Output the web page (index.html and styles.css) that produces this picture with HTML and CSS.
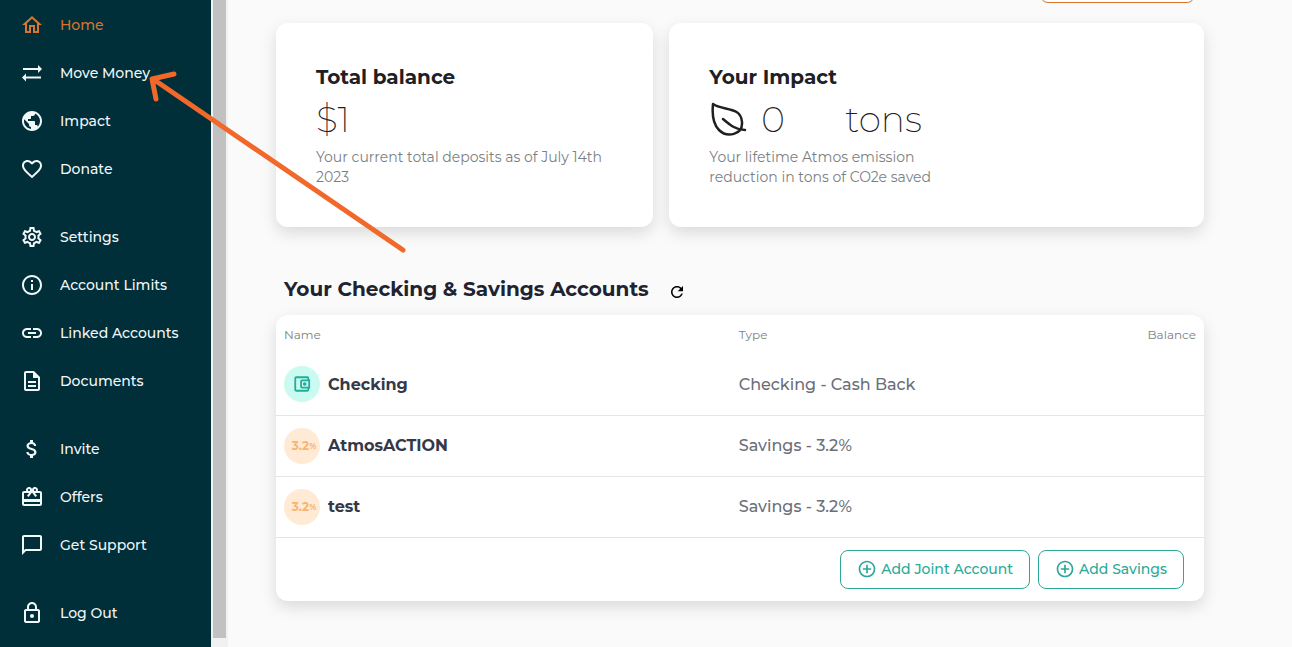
FILE: index.html
```html
<!DOCTYPE html>
<html lang="en">
<head>
  <meta charset="UTF-8" />
  <meta name="viewport" content="width=device-width, initial-scale=1.0" />
  <title>Atmos - Home</title>
  <link rel="stylesheet" href="styles.css">
</head>
<body>
  <div class="app">
    <nav class="sidebar">
      <div class="nav-group">
        <a class="nav-link active" href="#">
          <svg class="icon" viewBox="0 0 24 24"><path d="M12 5.69l5 4.5V18h-2v-6H9v6H7v-7.81l5-4.5M12 3L2 12h3v8h6v-6h2v6h6v-8h3L12 3z"/></svg>
          Home
        </a>
        <a class="nav-link" href="#">
          <svg class="icon" viewBox="0 0 24 24"><path d="M3 7h15V4l4 4-4 4V9H3zM21 15.500v2H6v3l-4-4 4-4v3z"/></svg>
          Move Money
        </a>
        <a class="nav-link" href="#">
          <svg class="icon" viewBox="0 0 24 24"><path d="M12 2C6.480 2 2 6.480 2 12s4.480 10 10 10 10-4.480 10-10S17.520 2 12 2zm-1 17.930c-3.950-.49-7-3.850-7-7.930 0-.62.080-1.210.21-1.790L9 15v1c0 1.100.9 2 2 2v1.930zm6.900-2.540c-.26-.81-1-1.390-1.900-1.390h-1v-3c0-.55-.45-1-1-1H8v-2h2c.55 0 1-.45 1-1V7h2c1.100 0 2-.9 2-2v-.41c2.930 1.190 5 4.060 5 7.410 0 2.080-.8 3.970-2.100 5.390z"/></svg>
          Impact
        </a>
        <a class="nav-link" href="#">
          <svg class="icon" viewBox="0 0 24 24"><path d="M16.500 3c-1.740 0-3.410.81-4.500 2.090C10.910 3.810 9.240 3 7.500 3 4.420 3 2 5.420 2 8.500c0 3.780 3.400 6.860 8.550 11.540L12 21.350l1.450-1.320C18.600 15.360 22 12.280 22 8.500 22 5.420 19.580 3 16.500 3zm-4.400 15.550l-.1.100-.1-.1C7.140 14.240 4 11.390 4 8.500 4 6.500 5.500 5 7.500 5c1.540 0 3.040.99 3.570 2.360h1.870C13.460 5.990 14.960 5 16.500 5c2 0 3.500 1.500 3.500 3.500 0 2.890-3.140 5.740-7.900 10.050z"/></svg>
          Donate
        </a>
      </div>

      <div class="nav-group">
        <a class="nav-link" href="#">
          <svg class="icon" viewBox="0 0 24 24"><path d="M19.430 12.980c.04-.32.07-.64.07-.98 0-.34-.03-.66-.07-.98l2.110-1.650c.19-.15.24-.42.12-.64l-2-3.460c-.09-.16-.26-.25-.44-.25-.06 0-.12.010-.17.030l-2.490 1c-.52-.4-1.080-.73-1.690-.98l-.38-2.650C14.460 2.180 14.250 2 14 2h-4c-.25 0-.46.18-.49.42l-.38 2.650c-.61.25-1.170.59-1.690.98l-2.490-1c-.06-.02-.12-.03-.18-.03-.17 0-.34.09-.43.25l-2 3.460c-.13.22-.07.49.12.64l2.110 1.650c-.04.32-.07.65-.07.98 0 .33.03.66.07.98l-2.110 1.650c-.19.15-.24.42-.12.64l2 3.460c.09.16.26.25.44.25.06 0 .12-.01.17-.03l2.490-1c.52.4 1.080.73 1.690.98l.38 2.650c.03.24.24.42.49.42h4c.25 0 .46-.18.49-.42l.38-2.650c.61-.25 1.170-.59 1.690-.98l2.490 1c.06.02.12.03.18.03.17 0 .34-.09.43-.25l2-3.460c.12-.22.07-.49-.12-.64l-2.110-1.650zm-1.980-1.710c.04.31.05.52.05.73 0 .21-.02.43-.05.73l-.14 1.130.89.7 1.080.84-.7 1.210-1.270-.51-1.040-.42-.9.680c-.43.32-.84.56-1.250.73l-1.060.43-.16 1.130-.2 1.350h-1.400l-.19-1.350-.16-1.130-1.060-.43c-.43-.18-.83-.41-1.230-.71l-.91-.7-1.060.43-1.270.51-.7-1.210 1.080-.84.89-.7-.14-1.130c-.03-.31-.05-.54-.05-.74s.02-.43.05-.73l.14-1.130-.89-.7-1.080-.84.7-1.210 1.270.51 1.040.42.9-.68c.43-.32.84-.56 1.250-.73l1.060-.43.16-1.130.2-1.350h1.390l.19 1.350.16 1.130 1.060.43c.43.18.83.41 1.230.71l.91.7 1.060-.43 1.270-.51.7 1.210-1.070.85-.89.7.14 1.130zM12 8c-2.210 0-4 1.790-4 4s1.790 4 4 4 4-1.790 4-4-1.790-4-4-4zm0 6c-1.100 0-2-.9-2-2s.9-2 2-2 2 .9 2 2-.9 2-2 2z"/></svg>
          Settings
        </a>
        <a class="nav-link" href="#">
          <svg class="icon" viewBox="0 0 24 24"><path d="M11 7h2v2h-2zm0 4h2v6h-2zm1-9C6.480 2 2 6.480 2 12s4.480 10 10 10 10-4.480 10-10S17.520 2 12 2zm0 18c-4.410 0-8-3.590-8-8s3.590-8 8-8 8 3.590 8 8-3.590 8-8 8z"/></svg>
          Account Limits
        </a>
        <a class="nav-link" href="#">
          <svg class="icon" viewBox="0 0 24 24"><path d="M3.900 12c0-1.710 1.390-3.100 3.100-3.100h4V7H7c-2.760 0-5 2.240-5 5s2.240 5 5 5h4v-1.900H7c-1.710 0-3.100-1.390-3.100-3.100zM8 13h8v-2H8v2zm9-6h-4v1.900h4c1.710 0 3.100 1.390 3.100 3.100s-1.390 3.100-3.100 3.100h-4V17h4c2.760 0 5-2.240 5-5s-2.240-5-5-5z"/></svg>
          Linked Accounts
        </a>
        <a class="nav-link" href="#">
          <svg class="icon" viewBox="0 0 24 24"><path d="M8 16h8v2H8zm0-4h8v2H8zm6-10H6c-1.100 0-2 .9-2 2v16c0 1.100.89 2 1.990 2H18c1.100 0 2-.9 2-2V8l-6-6zm4 18H6V4h7v5h5v11z"/></svg>
          Documents
        </a>
      </div>

      <div class="nav-group">
        <a class="nav-link" href="#">
          <svg class="icon" viewBox="0 0 24 24"><path d="M11.800 10.900c-2.270-.59-3-1.200-3-2.150 0-1.090 1.010-1.850 2.700-1.850 1.780 0 2.440.85 2.500 2.100h2.210c-.07-1.720-1.120-3.300-3.210-3.810V3h-3v2.160c-1.940.42-3.500 1.680-3.500 3.610 0 2.310 1.910 3.460 4.700 4.130 2.500.6 3 1.480 3 2.410 0 .69-.49 1.790-2.700 1.790-2.060 0-2.870-.92-2.980-2.100h-2.200c.12 2.190 1.760 3.420 3.680 3.830V21h3v-2.150c1.950-.37 3.500-1.500 3.500-3.550 0-2.840-2.430-3.810-4.700-4.400z"/></svg>
          Invite
        </a>
        <a class="nav-link" href="#">
          <svg class="icon" viewBox="0 0 24 24"><path d="M20 6h-2.180c.11-.31.18-.65.18-1 0-1.660-1.340-3-3-3-1.050 0-1.960.54-2.500 1.350l-.5.670-.5-.68C10.960 2.540 10.050 2 9 2 7.340 2 6 3.340 6 5c0 .35.070.69.18 1H4c-1.110 0-1.990.89-1.990 2L2 19c0 1.110.89 2 2 2h16c1.110 0 2-.89 2-2V8c0-1.110-.89-2-2-2zm-5-2c.55 0 1 .45 1 1s-.45 1-1 1-1-.45-1-1 .45-1 1-1zM9 4c.55 0 1 .45 1 1s-.45 1-1 1-1-.45-1-1 .45-1 1-1zm11 15H4v-2h16v2zm0-5H4V8h5.080L7 10.830 8.620 12 12 7.400l3.380 4.600L17 10.830 14.920 8H20v6z"/></svg>
          Offers
        </a>
        <a class="nav-link" href="#">
          <svg class="icon" viewBox="0 0 24 24"><path d="M20 2H4c-1.100 0-2 .9-2 2v18l4-4h14c1.100 0 2-.9 2-2V4c0-1.100-.9-2-2-2zm0 14H5.170L4 17.170V4h16v12z"/></svg>
          Get Support
        </a>
      </div>

      <div class="nav-group">
        <a class="nav-link" href="#">
          <svg class="icon" viewBox="0 0 24 24"><path d="M18 8h-1V6c0-2.760-2.240-5-5-5S7 3.240 7 6v2H6c-1.100 0-2 .9-2 2v10c0 1.100.9 2 2 2h12c1.100 0 2-.9 2-2V10c0-1.100-.9-2-2-2zM9 6c0-1.660 1.340-3 3-3s3 1.340 3 3v2H9V6zm9 14H6V10h12v10zm-6-3c1.100 0 2-.9 2-2s-.9-2-2-2-2 .9-2 2 .9 2 2 2z"/></svg>
          Log Out
        </a>
      </div>
    </nav>

    <div class="scroll-track"><div class="scroll-thumb"></div></div>

    <main class="content">
      <div class="top-actions">
        <button class="promo-btn" type="button"></button>
      </div>

      <div class="summary">
        <section class="card balance-card">
          <h2>Total balance</h2>
          <p class="figure">$1</p>
          <p class="note">Your current total deposits as of July 14th 2023</p>
        </section>

        <section class="card impact-card">
          <h2>Your Impact</h2>
          <p class="figure">
            <svg class="leaf" viewBox="0 0 38 36"><path d="M4 3C14 10 32 5 33 21C34 34 18 37 10 29C4 23 3 13 4 3ZM14 18C21 24 27 29 36 29"/></svg>
            <span class="amount">0</span>
            <span>tons</span>
          </p>
          <p class="note">Your lifetime Atmos emission reduction in tons of CO2e saved</p>
        </section>
      </div>

      <div class="section-title">
        <h2>Your Checking &amp; Savings Accounts</h2>
        <button class="refresh-btn" type="button" aria-label="Refresh">
          <svg viewBox="0 0 24 24"><path d="M17.650 6.350C16.200 4.900 14.210 4 12 4c-4.420 0-7.990 3.580-7.990 8s3.570 8 7.990 8c3.730 0 6.840-2.550 7.730-6h-2.080c-.82 2.330-3.040 4-5.650 4-3.310 0-6-2.690-6-6s2.690-6 6-6c1.660 0 3.140.69 4.220 1.780L13 11h7V4l-2.350 2.350z"/></svg>
        </button>
      </div>

      <section class="accounts">
        <table>
          <thead>
            <tr>
              <th class="col-name">Name</th>
              <th>Type</th>
              <th class="col-balance">Balance</th>
            </tr>
          </thead>
          <tbody>
            <tr>
              <td>
                <div class="account">
                  <span class="badge checking">
                    <svg viewBox="0 0 20 20"><path d="M17 6V3.500a1 1 0 0 0-1-1H3.500a1 1 0 0 0-1 1v13a1 1 0 0 0 1 1H16a1 1 0 0 0 1-1V14M10 6h8v8h-8a1 1 0 0 1-1-1V7a1 1 0 0 1 1-1z"/><circle cx="13" cy="10" r="1"/></svg>
                  </span>
                  Checking
                </div>
              </td>
              <td>Checking - Cash Back</td>
              <td></td>
            </tr>
            <tr>
              <td><div class="account"><span class="badge savings">3.2<small>%</small></span>AtmosACTION</div></td>
              <td>Savings - 3.2%</td>
              <td></td>
            </tr>
            <tr>
              <td><div class="account"><span class="badge savings">3.2<small>%</small></span>test</div></td>
              <td>Savings - 3.2%</td>
              <td></td>
            </tr>
          </tbody>
        </table>
        <div class="account-actions">
          <button class="add-btn" type="button">
            <svg viewBox="0 0 24 24"><path d="M13 7h-2v4H7v2h4v4h2v-4h4v-2h-4V7zm-1-5C6.480 2 2 6.480 2 12s4.480 10 10 10 10-4.480 10-10S17.520 2 12 2zm0 18c-4.410 0-8-3.590-8-8s3.590-8 8-8 8 3.590 8 8-3.590 8-8 8z"/></svg>
            Add Joint Account
          </button>
          <button class="add-btn" type="button">
            <svg viewBox="0 0 24 24"><path d="M13 7h-2v4H7v2h4v4h2v-4h4v-2h-4V7zm-1-5C6.480 2 2 6.480 2 12s4.480 10 10 10 10-4.480 10-10S17.520 2 12 2zm0 18c-4.410 0-8-3.590-8-8s3.590-8 8-8 8 3.590 8 8-3.590 8-8 8z"/></svg>
            Add Savings
          </button>
        </div>
      </section>
    </main>
  </div>

  <!-- Pointer to the Move Money link -->
  <svg class="pointer" viewBox="0 0 260 184"><path d="M255 180L5 9M26 4L4 9L8 29"/></svg>
</body>
</html>
```

FILE: styles.css
```css
* {
  margin: 0;
  padding: 0;
  box-sizing: border-box;
}

body {
  font-family: Montserrat, Inter, sans-serif;
  background: #fafafa;
  color: #1f2024;
  overflow: hidden;
}

button {
  font-family: inherit;
  cursor: pointer;
}

.app {
  display: flex;
  height: 100vh;
}

/* Sidebar */
.sidebar {
  flex: none;
  width: 211px;
  padding-top: 1px;
  background: #002e39;
  overflow: hidden;
}

.nav-group {
  margin-bottom: 20px;
}

.nav-link {
  display: flex;
  align-items: center;
  gap: 16px;
  height: 48px;
  padding: 0 20px;
  color: #f2f7f8;
  font-size: 14px;
  font-weight: 500;
  text-decoration: none;
  white-space: nowrap;
}

.nav-link.active {
  color: #d5762f;
}

.icon {
  flex: none;
  width: 24px;
  height: 24px;
  fill: currentColor;
}

.scroll-track {
  flex: none;
  width: 17px;
  padding: 0 2px 9px;
  background: #f1f1f1;
}

.scroll-thumb {
  height: 100%;
  background: #c1c1c1;
}

/* Main column */
.content {
  flex: 1;
  padding: 0 88px 0 48px;
}

.top-actions {
  display: flex;
  justify-content: flex-end;
  margin-top: -35px;
  padding: 0 9px 20px;
}

.promo-btn {
  width: 155px;
  height: 38px;
  border: 1px solid #d5762f;
  border-radius: 8px;
  background: #fff;
}

.summary {
  display: grid;
  grid-template-columns: repeat(12, 1fr);
  gap: 16px;
}

.card {
  padding: 40px;
  background: #fff;
  border-radius: 12px;
  box-shadow: 0 6px 16px rgba(0, 0, 0, 0.13);
}

.balance-card {
  grid-column: span 5;
}

.impact-card {
  grid-column: span 7;
}

h2 {
  font-size: 20px;
  font-weight: 700;
  line-height: 28px;
}

.figure {
  display: flex;
  align-items: center;
  height: 56px;
  font-size: 36px;
  font-weight: 200;
}

.leaf {
  width: 38px;
  height: 36px;
  margin-right: 14px;
  fill: none;
  stroke: currentColor;
  stroke-width: 2.5;
  stroke-linecap: round;
  stroke-linejoin: round;
}

.amount {
  width: 84px;
}

.note {
  color: #7b7f82;
  font-size: 14px;
  font-weight: 400;
  line-height: 20px;
}

.impact-card .note {
  max-width: 232px;
}

/* Accounts */
.section-title {
  display: flex;
  align-items: center;
  gap: 16px;
  margin: 48px 8px 12px;
  color: #20232f;
}

.refresh-btn {
  width: 24px;
  height: 24px;
  border: none;
  background: none;
}

.refresh-btn svg {
  display: block;
  width: 18px;
  margin: 5px auto 0;
}

.accounts {
  background: #fff;
  border-radius: 12px;
  box-shadow: 0 6px 16px rgba(0, 0, 0, 0.13);
}

table {
  width: 100%;
  border-collapse: collapse;
  table-layout: fixed;
}

th {
  height: 39px;
  padding: 0 8px;
  color: #7b7f82;
  font-size: 12px;
  font-weight: 400;
  text-align: left;
}

.col-name {
  width: 49%;
}

th.col-balance {
  text-align: right;
}

td {
  height: 61px;
  padding: 0 8px;
  border-bottom: 1px solid #e4e5e6;
  color: #6b6f79;
  font-size: 16px;
  font-weight: 500;
}

.account {
  display: flex;
  align-items: center;
  gap: 8px;
  color: #343848;
  font-weight: 700;
}

.badge {
  display: flex;
  align-items: center;
  justify-content: center;
  width: 36px;
  height: 36px;
  border-radius: 50%;
}

.badge.checking {
  background: #cafaf0;
}

.badge svg {
  width: 18px;
  fill: none;
  stroke: #1fae9b;
  stroke-width: 2;
}

.badge.savings {
  padding-left: 4px;
  background: #ffebd5;
  color: #f9b46f;
  font-size: 12px;
  font-weight: 700;
}

.badge small {
  font-size: 8px;
}

.account-actions {
  display: flex;
  justify-content: flex-end;
  gap: 8px;
  padding: 12px 20px;
}

.add-btn {
  display: flex;
  align-items: center;
  gap: 4px;
  height: 39px;
  padding: 0 16px;
  border: 1px solid #2ba898;
  border-radius: 8px;
  background: #fff;
  color: #2ba898;
  font-size: 14px;
  font-weight: 500;
}

.add-btn svg {
  width: 20px;
  fill: currentColor;
}

.pointer {
  position: absolute;
  left: 148px;
  top: 70px;
  width: 260px;
  height: 184px;
  fill: none;
  stroke: #f1682a;
  stroke-width: 5;
  stroke-linecap: round;
  stroke-linejoin: round;
  pointer-events: none;
}
```
